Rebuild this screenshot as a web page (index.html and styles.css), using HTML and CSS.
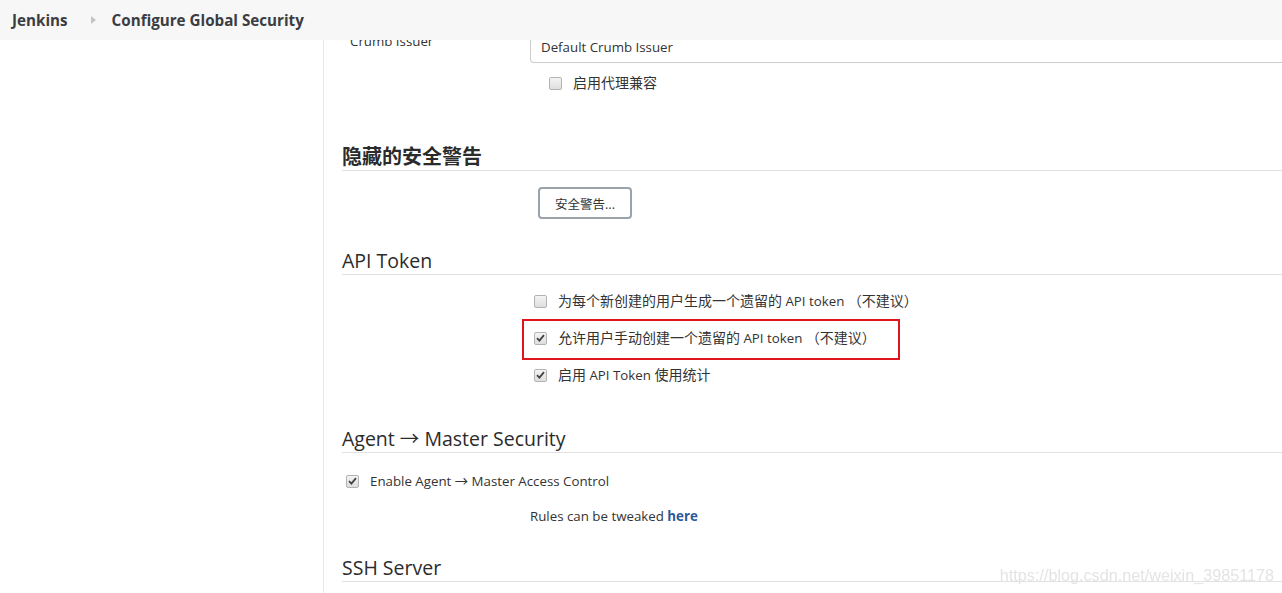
FILE: index.html
```html
<!DOCTYPE html>
<html lang="zh">
<head>
<meta charset="utf-8">
<title>Configure Global Security [Jenkins]</title>
<link rel="stylesheet" href="styles.css">
</head>
<body>
<header class="breadcrumbs">
  <a class="crumb" href="#">Jenkins</a>
  <span class="crumb-sep"><svg width="5" height="8" viewBox="0 0 5 8"><path d="M0 0 L5 4 L0 8 Z" fill="#c4c4c4"/></svg></span>
  <a class="crumb" href="#">Configure Global Security</a>
</header>
<div class="page">
  <aside class="side-panel"></aside>
  <main class="main-panel">
    <div class="form-row crumb-row">
      <div class="label">Crumb Issuer</div>
      <div class="field"><div class="select">Default Crumb Issuer</div></div>
    </div>
    <div class="form-row opt-row">
      <div></div>
      <div class="field check proxy"><span class="cb"></span><span class="zh">启用代理兼容</span></div>
    </div>

    <h2 class="section-header zh-head">隐藏的安全警告</h2>
    <div class="form-row btn-row">
      <div></div>
      <div class="field"><button class="btn">安全警告...</button></div>
    </div>

    <h2 class="section-header api">API Token</h2>
    <div class="form-row token-row first">
      <div></div>
      <div class="field check"><span class="cb"></span><span><span class="zh">为每个新创建的用户生成一个遗留的</span> API token <span class="zh">（不建议）</span></span></div>
    </div>
    <div class="form-row token-row">
      <div></div>
      <div class="field check highlight"><span class="cb on"><svg width="9" height="8" viewBox="0 0 9 8"><path d="M1 4.2 L3.4 6.6 L8 1.2" fill="none" stroke="#444" stroke-width="1.8"/></svg></span><span><span class="zh">允许用户手动创建一个遗留的</span> API token <span class="zh">（不建议）</span></span><span class="mark-box"></span></div>
    </div>
    <div class="form-row token-row">
      <div></div>
      <div class="field check"><span class="cb on"><svg width="9" height="8" viewBox="0 0 9 8"><path d="M1 4.2 L3.4 6.6 L8 1.2" fill="none" stroke="#444" stroke-width="1.8"/></svg></span><span><span class="zh">启用</span> API Token <span class="zh">使用统计</span></span></div>
    </div>

    <h2 class="section-header agent">Agent → Master Security</h2>
    <div class="check agent-row"><span class="cb on"><svg width="9" height="8" viewBox="0 0 9 8"><path d="M1 4.2 L3.4 6.6 L8 1.2" fill="none" stroke="#444" stroke-width="1.8"/></svg></span><span>Enable Agent → Master Access Control</span></div>
    <div class="form-row rules-row">
      <div></div>
      <div class="field">Rules can be tweaked <a href="#">here</a></div>
    </div>

    <h2 class="section-header ssh">SSH Server</h2>
  </main>
</div>
<div class="watermark">https://blog.csdn.net/weixin_39851178</div>
</body>
</html>
```
FILE: styles.css
```css
html, body {
  margin: 0;
  padding: 0;
  background: #fff;
  height: 593px;
  overflow: hidden;
}
body {
  font-family: "Open Sans", "Noto Sans CJK SC", sans-serif;
  font-size: 13.3px;
  color: #333;
}
.zh {
  font-size: 14px;
}
.breadcrumbs {
  position: fixed;
  top: 0;
  left: 0;
  right: 0;
  height: 40px;
  background: #f7f7f7;
  display: flex;
  align-items: center;
  padding-left: 12px;
  z-index: 10;
}
.crumb {
  font-size: 15.2px;
  font-weight: bold;
  color: #3b3d42;
  text-decoration: none;
}
.crumb-sep {
  display: flex;
  margin: 0 16px 0 23px;
}
.page {
  display: flex;
  height: 593px;
}
.side-panel {
  width: 323px;
  flex: none;
  border-right: 1px solid #e8e8e8;
}
.main-panel {
  flex: 1;
  padding: 29px 0 0 18px;
  min-width: 0;
}
.form-row {
  display: grid;
  grid-template-columns: 188px 1fr;
}
.label {
  padding: 3px 0 0 8px;
  line-height: 18px;
}
.select {
  height: 32px;
  border: 1px solid #ccc;
  border-right: none;
  border-radius: 4px 0 0 4px;
  padding-left: 10px;
  line-height: 34px;
}
.check {
  display: flex;
  align-items: center;
  line-height: 20px;
  height: 20px;
}
.cb {
  width: 11px;
  height: 11px;
  border: 1px solid #b3b3b3;
  border-radius: 2px;
  background: linear-gradient(#f4f4f4, #dedede);
  margin-right: 11px;
  flex: none;
  display: flex;
  align-items: center;
  justify-content: center;
}
.opt-row {
  margin-top: 10px;
}
.proxy {
  padding-left: 19px;
}
.section-header {
  font-size: 19.5px;
  font-weight: normal;
  line-height: 26px;
  margin: 0;
  border-bottom: 1px solid #e2e2e2;
  color: #2b2b2b;
}
.section-header.zh-head {
  font-size: 20px;
  font-weight: bold;
  margin-top: 51px;
}
.btn-row {
  margin-top: 16px;
}
.btn {
  margin-left: 8px;
  width: 94px;
  height: 32px;
  border: 2px solid #9ba3aa;
  border-radius: 4px;
  background: #fff;
  font-family: inherit;
  font-size: 12.5px;
  color: #333;
  padding: 0;
}
.section-header.api {
  margin-top: 29px;
}
.token-row {
  margin-top: 17px;
}
.token-row.first {
  margin-top: 16px;
}
.token-row .check {
  padding-left: 4px;
}
.highlight {
  position: relative;
}
.mark-box {
  position: absolute;
  left: -8px;
  top: -9px;
  width: 374px;
  height: 37px;
  border: 2px solid #e0141c;
}
.section-header.agent {
  margin-top: 41px;
}
.agent-row {
  margin-top: 18px;
  padding-left: 4px;
}
.rules-row {
  margin-top: 15px;
  line-height: 20px;
}
.rules-row a {
  color: #2a5a9a;
  font-weight: bold;
  text-decoration: none;
}
.section-header.ssh {
  margin-top: 29px;
}
.watermark {
  position: fixed;
  right: 8px;
  bottom: 8px;
  font-family: "Liberation Sans", sans-serif;
  font-size: 16.2px;
  color: #e4e4e4;
}
```
